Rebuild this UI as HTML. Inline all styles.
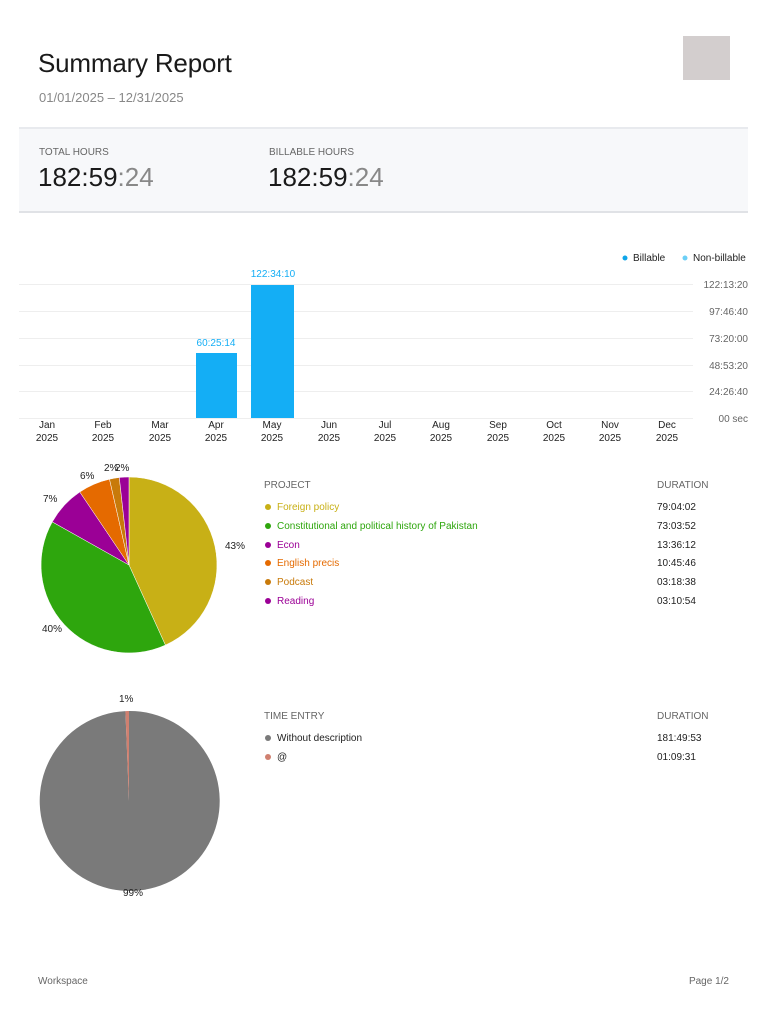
<!DOCTYPE html>
<html><head><meta charset="utf-8"><style>
*{margin:0;padding:0;box-sizing:border-box}
body{width:768px;height:1024px;background:#fff;font-family:"Liberation Sans",sans-serif;color:#222;position:relative;overflow:hidden}
.a{position:absolute;white-space:nowrap}
</style></head><body>
<div class="a" style="left:38px;top:48px;font-size:26px;color:#1a1a1a;letter-spacing:-0.2px">Summary Report</div>
<div class="a" style="left:39px;top:90px;font-size:13px;color:#888">01/01/2025 – 12/31/2025</div>
<div class="a" style="left:683px;top:36px;width:47px;height:44px;background:#d3cece"></div>
<div class="a" style="left:19px;top:127px;width:729px;height:86px;background:#f7f8fa;border-top:2px solid #e8eaee;border-bottom:2px solid #e0e2e6"></div>
<div class="a" style="left:39px;top:147px;font-size:10px;color:#666">TOTAL HOURS</div>
<div class="a" style="left:38px;top:162px;font-size:26px;color:#1a1a1a">182:59<span style="color:#888">:24</span></div>
<div class="a" style="left:269px;top:147px;font-size:10px;color:#666">BILLABLE HOURS</div>
<div class="a" style="left:268px;top:162px;font-size:26px;color:#1a1a1a">182:59<span style="color:#888">:24</span></div>

<svg class="a" style="left:0;top:0" width="768" height="1024" font-family="Liberation Sans, sans-serif">
<circle cx="625" cy="258" r="2.5" fill="#0ea5e9"/><text x="633" y="261" font-size="10" fill="#222">Billable</text>
<circle cx="685" cy="258" r="2.5" fill="#6ccff6"/><text x="693" y="261" font-size="10" fill="#222">Non-billable</text>
<g stroke="#eeeeee" stroke-width="1">
<line x1="19" y1="284.5" x2="693" y2="284.5"/><line x1="19" y1="311.5" x2="693" y2="311.5"/><line x1="19" y1="338.5" x2="693" y2="338.5"/><line x1="19" y1="365.5" x2="693" y2="365.5"/><line x1="19" y1="391.5" x2="693" y2="391.5"/><line x1="19" y1="418.5" x2="693" y2="418.5"/></g>
<g font-size="10" fill="#666" text-anchor="end">
<text x="748" y="288">122:13:20</text><text x="748" y="315">97:46:40</text><text x="748" y="342">73:20:00</text><text x="748" y="369">48:53:20</text><text x="748" y="395">24:26:40</text><text x="748" y="422">00 sec</text></g>
<rect x="196" y="353" width="41" height="65" fill="#14aef5"/>
<rect x="251" y="285" width="43" height="133" fill="#14aef5"/>
<text x="216" y="346" font-size="10" fill="#14aef5" text-anchor="middle">60:25:14</text>
<text x="273" y="277" font-size="10" fill="#14aef5" text-anchor="middle">122:34:10</text>
<g font-size="10" fill="#222" text-anchor="middle">
<text x="47" y="428">Jan</text><text x="47" y="441">2025</text>
<text x="103" y="428">Feb</text><text x="103" y="441">2025</text>
<text x="160" y="428">Mar</text><text x="160" y="441">2025</text>
<text x="216" y="428">Apr</text><text x="216" y="441">2025</text>
<text x="272" y="428">May</text><text x="272" y="441">2025</text>
<text x="329" y="428">Jun</text><text x="329" y="441">2025</text>
<text x="385" y="428">Jul</text><text x="385" y="441">2025</text>
<text x="441" y="428">Aug</text><text x="441" y="441">2025</text>
<text x="498" y="428">Sep</text><text x="498" y="441">2025</text>
<text x="554" y="428">Oct</text><text x="554" y="441">2025</text>
<text x="610" y="428">Nov</text><text x="610" y="441">2025</text>
<text x="667" y="428">Dec</text><text x="667" y="441">2025</text></g>

<g stroke="#fff" stroke-width="0.5">
<path d="M129 565 L129 477 A88 88 0 0 1 165.4 645.1 Z" fill="#c8b016"/>
<path d="M129 565 L165.4 645.1 A88 88 0 0 1 52.3 521.9 Z" fill="#2ea60d"/>
<path d="M129 565 L52.3 521.9 A88 88 0 0 1 79.8 492 Z" fill="#9b0096"/>
<path d="M129 565 L79.8 492 A88 88 0 0 1 109.5 479.2 Z" fill="#e56a00"/>
<path d="M129 565 L109.5 479.2 A88 88 0 0 1 119.3 477.5 Z" fill="#c87a0a"/>
<path d="M129 565 L119.3 477.5 A88 88 0 0 1 129 477 Z" fill="#9b0096"/>
</g>
<g font-size="10" fill="#222">
<text x="225" y="549">43%</text><text x="42" y="632">40%</text><text x="43" y="502">7%</text><text x="80" y="479">6%</text><text x="104" y="471">2%</text><text x="115" y="471">2%</text>
</g>
<g font-size="10">
<text x="264" y="488" fill="#666">PROJECT</text><text x="657" y="488" fill="#666">DURATION</text>
<circle cx="268" cy="507" r="3" fill="#c8b016"/><text x="277" y="510" fill="#c8b016">Foreign policy</text><text x="657" y="510" fill="#222">79:04:02</text>
<circle cx="268" cy="526" r="3" fill="#2ea60d"/><text x="277" y="529" fill="#2ea60d">Constitutional and political history of Pakistan</text><text x="657" y="529" fill="#222">73:03:52</text>
<circle cx="268" cy="545" r="3" fill="#9b0096"/><text x="277" y="548" fill="#9b0096">Econ</text><text x="657" y="548" fill="#222">13:36:12</text>
<circle cx="268" cy="563" r="3" fill="#e56a00"/><text x="277" y="566" fill="#e56a00">English precis</text><text x="657" y="566" fill="#222">10:45:46</text>
<circle cx="268" cy="582" r="3" fill="#c87a0a"/><text x="277" y="585" fill="#c87a0a">Podcast</text><text x="657" y="585" fill="#222">03:18:38</text>
<circle cx="268" cy="601" r="3" fill="#9b0096"/><text x="277" y="604" fill="#9b0096">Reading</text><text x="657" y="604" fill="#222">03:10:54</text>
</g>

<path d="M129 801 L129 711 A90 90 0 1 1 125.4 711.1 Z" fill="#7a7a7a"/>
<path d="M129 801 L125.4 711.1 A90 90 0 0 1 129 711 Z" fill="#d08070"/>
<g font-size="10" fill="#222"><text x="119" y="702">1%</text><text x="123" y="896">99%</text></g>
<g font-size="10">
<text x="264" y="719" fill="#666">TIME ENTRY</text><text x="657" y="719" fill="#666">DURATION</text>
<circle cx="268" cy="738" r="3" fill="#7a7a7a"/><text x="277" y="741" fill="#222">Without description</text><text x="657" y="741" fill="#222">181:49:53</text>
<circle cx="268" cy="757" r="3" fill="#d08070"/><text x="277" y="760" fill="#222">@</text><text x="657" y="760" fill="#222">01:09:31</text>
</g>
<text x="38" y="984" font-size="10" fill="#666">Workspace</text>
<text x="729" y="984" font-size="10" fill="#666" text-anchor="end">Page 1/2</text>
</svg>
</body></html>
